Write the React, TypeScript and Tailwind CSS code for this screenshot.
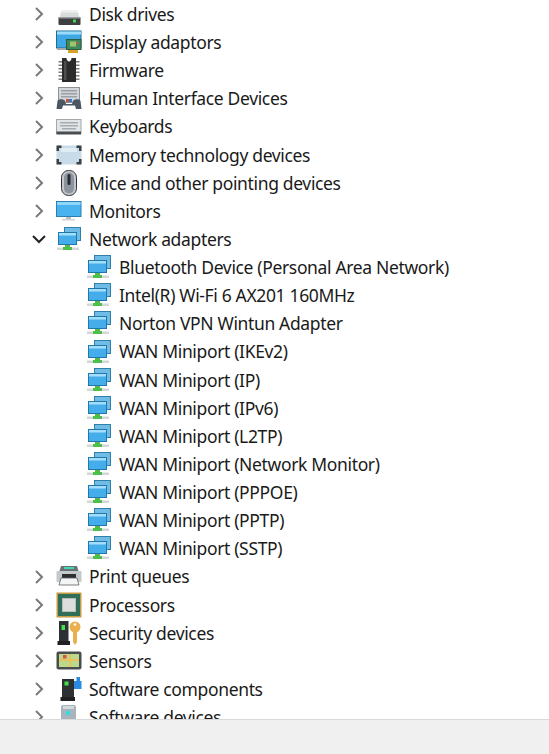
import { ReactNode } from "react";

const Net = () => (
  <svg width="26" height="24" viewBox="0 0 26 24">
    <rect x="8.5" y="0.5" width="16" height="13" fill="#6fbce6" stroke="#2f7fa8" />
    <rect x="2.5" y="5.5" width="18" height="12" fill="#45aeea" stroke="#1f78ac" />
    <rect x="3" y="6" width="17" height="2.5" fill="#a5def8" />
    <path d="M9 18h5v2H9z" fill="#55b948" />
    <path d="M1 20.5h22v2.5H1z" fill="#d3d7d7" />
    <path d="M7 20h9v3H7z" fill="#4cc04a" />
  </svg>
);

const Disk = () => (
  <svg width="26" height="24" viewBox="0 0 26 24">
    <path d="M6 8h15l2.5 7h-20z" fill="#d9dcdd" />
    <path d="M6 8h15l1 2.5H5z" fill="#eef0f0" />
    <rect x="2.5" y="15" width="22" height="8" rx="1" fill="#3d3f40" />
    <rect x="2.5" y="15" width="22" height="1.5" fill="#9a9d9f" />
    <rect x="17" y="17.5" width="3" height="3" fill="#42d84a" />
  </svg>
);

const Display = () => (
  <svg width="26" height="24" viewBox="0 0 26 24">
    <rect x="0.5" y="1" width="24.5" height="17" fill="#3fa8e6" stroke="#28688f" />
    <path d="M1 1.5h24v3H1z" fill="#9ddcf8" />
    <path d="M1 18h14v2H1z" fill="#a5a8aa" />
    <rect x="10.5" y="9.5" width="14.5" height="10" fill="#3f8a5a" stroke="#2a5e3f" />
    <rect x="14" y="11.5" width="6" height="5" fill="#9fc46b" />
    <rect x="20.5" y="12" width="2" height="2" fill="#d8534a" />
    <path d="M12 20h10v3H12z" fill="#d9a02c" />
  </svg>
);

const Firmware = () => (
  <svg width="26" height="24" viewBox="0 0 26 24">
    <path d="M6 0h4.5c0 4.5 5 4.5 5 0H20v24H6z" fill="#2b2b2b" />
    <path d="M8 3h2.5v19H8z" fill="#4f4f4f" />
    <path
      d="M2.5 3h3.5v1.5H2.5zM2.5 6.5h3.5V8H2.5zM2.5 10h3.5v1.5H2.5zM2.5 13.5h3.5V15H2.5zM2.5 17h3.5v1.5H2.5zM2.5 20.500h3.5V22H2.5zM20 3h3.500v1.500H20zM20 6.500h3.500V8H20zM20 10h3.500v1.500H20zM20 13.500h3.500V15H20zM20 17h3.500v1.500H20zM20 20.500h3.500V22H20z"
      fill="#7d7d7d"
    />
  </svg>
);

const Hid = () => (
  <svg width="26" height="24" viewBox="0 0 26 24">
    <rect x="2.500" y="1.500" width="21" height="15" fill="#d3d7da" stroke="#8c9296" />
    <path d="M5 4h16v1.500H5zM5 7h16v1.500H5zM5 10h16v1.500H5z" fill="#9aa0a4" />
    <path d="M0.500 23l1-8c.3-2.500 6.500-2.500 7.500 0l1 3h6l1-3c1-2.500 7.200-2.500 7.500 0l1 8h-5.500l-1-3.500H7l-1 3.500z" fill="#4b5864" />
    <rect x="10" y="13" width="3" height="3" fill="#d84a3c" />
    <rect x="13" y="13" width="3" height="3" fill="#2f7fe0" />
  </svg>
);

const Keyboard = () => (
  <svg width="26" height="24" viewBox="0 0 26 24">
    <rect x="0.500" y="4.500" width="24.500" height="14" fill="#e2e5e7" stroke="#a3a8ab" />
    <path d="M4 7h18v1.500H4zM4 10h18v1.500H4zM6 13h14v1.500H6z" fill="#a5abaf" />
    <rect x="0.500" y="16.500" width="24.500" height="3" fill="#4a4d50" />
  </svg>
);

const Memory = () => (
  <svg width="26" height="24" viewBox="0 0 26 24">
    <rect x="0.500" y="2.500" width="25" height="19" rx="1.500" fill="#c7dbe8" />
    <path d="M0.500 2.500h5v2.500H3v3H0.500zM20.500 2.500h5v5.500h-2.500V5h-2.500zM0.500 16h2.500v3h2.500v2.500h-5zM23 16h2.500v5.500h-5V19H23z" fill="#3d4143" />
    <rect x="5" y="5" width="16" height="4" fill="#dfecf4" />
  </svg>
);

const Mouse = () => (
  <svg width="26" height="26" viewBox="0 0 26 26">
    <rect x="5.500" y="0.500" width="15" height="25" rx="7" fill="#c4c7cb" stroke="#303336" />
    <rect x="8" y="2.500" width="10" height="21" rx="5" fill="#8b949d" />
    <rect x="11.500" y="4" width="3" height="11" rx="1.500" fill="#2a2d30" />
  </svg>
);

const Monitor = () => (
  <svg width="26" height="24" viewBox="0 0 26 24">
    <rect x="0.500" y="2.500" width="24.500" height="15" fill="#49b3ef" stroke="#2a80b0" />
    <path d="M1 3h23.500v3H1z" fill="#8fd6f8" />
    <path d="M10 18h5v2h-5z" fill="#b9bec1" />
    <path d="M6 20h13v1.500H6z" fill="#cfd3d5" />
  </svg>
);

const Printer = () => (
  <svg width="26" height="24" viewBox="0 0 26 24">
    <path d="M5 1h16l1.500 5h-19z" fill="#6b7072" />
    <path d="M8 2h10v2H8z" fill="#3fd6b4" />
    <rect x="0.500" y="6" width="25" height="11" rx="1" fill="#c4c9cb" />
    <path d="M6 9h14v4H6z" fill="#2c2e30" />
    <path d="M5 13h16l2 7H3z" fill="#f4f5f5" stroke="#5d6164" strokeWidth="0.800" />
  </svg>
);

const Cpu = () => (
  <svg width="26" height="26" viewBox="0 0 26 26">
    <rect x="0.500" y="0.500" width="25" height="25" fill="#c89b42" />
    <rect x="2" y="2" width="22" height="22" fill="#2f6f57" />
    <rect x="6.500" y="6.500" width="13" height="13" fill="#dcdedd" stroke="#b9bcbb" />
  </svg>
);

const Security = () => (
  <svg width="26" height="26" viewBox="0 0 26 26">
    <path d="M3 1h9.500v20H3z" fill="#2e3133" />
    <rect x="5.500" y="5" width="3.500" height="5" fill="#42e04a" />
    <path d="M1.500 21h12.500v4H1.500z" fill="#1e2021" />
    <circle cx="19" cy="7" r="5.500" fill="#e9b04d" />
    <path d="M17 11h4v11l-2 3-2-3z" fill="#e9b04d" />
    <circle cx="19" cy="4.500" r="1.300" fill="#fff" />
  </svg>
);

const Sensor = () => (
  <svg width="26" height="24" viewBox="0 0 26 24">
    <rect x="0.500" y="2.500" width="25" height="18" rx="2" fill="#4a4d50" />
    <rect x="3" y="5" width="20" height="13" fill="#bcd98b" />
    <path d="M3 10h20v2H3zM13 5h2v13h-2z" fill="#e8c25c" />
    <rect x="7" y="6" width="3.500" height="3.500" fill="#d8534a" />
  </svg>
);

const SoftComp = () => (
  <svg width="26" height="26" viewBox="0 0 26 26">
    <path d="M6 3h12v18H6z" fill="#2e3133" />
    <rect x="8.500" y="5.500" width="4" height="4" fill="#42e04a" />
    <path d="M4.500 21h14.500v4H4.500z" fill="#1e2021" />
    <path d="M18 5h2.500V1h3.500v4h1.500v8H18z" fill="#2b8be0" />
  </svg>
);

const SoftDev = () => (
  <svg width="26" height="26" viewBox="0 0 26 26">
    <rect x="5" y="1" width="15" height="24" rx="2" fill="#a8b3bb" />
    <rect x="7" y="2" width="11" height="3" fill="#d2d8dc" />
    <rect x="10" y="7" width="4" height="4" fill="#35dbe0" />
  </svg>
);

const Chevron = ({ open }: { open?: boolean }) => (
  <svg width="16" height="16" viewBox="0 0 16 16" fill="none">
    {open ? (
      <path d="M2 5l6 6 6-6" stroke="#222" strokeWidth="2" />
    ) : (
      <path d="M5 2l6 6-6 6" stroke="#7a7a7a" strokeWidth="2" />
    )}
  </svg>
);

const Row = ({ icon, label, open }: { icon: ReactNode; label: string; open?: boolean }) => (
  <div className="flex h-[28.125px] items-center pl-[31px]">
    <Chevron open={open} />
    <div className="ml-[9px] flex w-[26px] justify-start">{icon}</div>
    <span className="ml-[7px] whitespace-nowrap">{label}</span>
  </div>
);

const Child = ({ label }: { label: string }) => (
  <div className="flex h-[28.125px] items-center pl-[86px]">
    <Net />
    <span className="ml-[7px] whitespace-nowrap">{label}</span>
  </div>
);

const before: [ReactNode, string][] = [
  [<Disk />, "Disk drives"],
  [<Display />, "Display adaptors"],
  [<Firmware />, "Firmware"],
  [<Hid />, "Human Interface Devices"],
  [<Keyboard />, "Keyboards"],
  [<Memory />, "Memory technology devices"],
  [<Mouse />, "Mice and other pointing devices"],
  [<Monitor />, "Monitors"],
];

const adapters = [
  "Bluetooth Device (Personal Area Network)",
  "Intel(R) Wi-Fi 6 AX201 160MHz",
  "Norton VPN Wintun Adapter",
  "WAN Miniport (IKEv2)",
  "WAN Miniport (IP)",
  "WAN Miniport (IPv6)",
  "WAN Miniport (L2TP)",
  "WAN Miniport (Network Monitor)",
  "WAN Miniport (PPPOE)",
  "WAN Miniport (PPTP)",
  "WAN Miniport (SSTP)",
];

const after: [ReactNode, string][] = [
  [<Printer />, "Print queues"],
  [<Cpu />, "Processors"],
  [<Security />, "Security devices"],
  [<Sensor />, "Sensors"],
  [<SoftComp />, "Software components"],
  [<SoftDev />, "Software devices"],
];

const App = () => {
  return (
    <div className="flex h-[754px] w-[549px] flex-col overflow-hidden bg-white font-['Noto_Sans',sans-serif] text-[17.5px] tracking-[-0.35px] text-[#1a1a1a]">
      <div className="h-[719px] overflow-hidden">
        {before.map(([icon, label]) => (
          <Row key={label} icon={icon} label={label} />
        ))}
        <Row icon={<Net />} label="Network adapters" open />
        {adapters.map((a) => (
          <Child key={a} label={a} />
        ))}
        {after.map(([icon, label]) => (
          <Row key={label} icon={icon} label={label} />
        ))}
      </div>
      <div className="h-[35px] border-t border-[#d9d9d9] bg-[#f0f0f0]" />
    </div>
  );
};

export default App;
